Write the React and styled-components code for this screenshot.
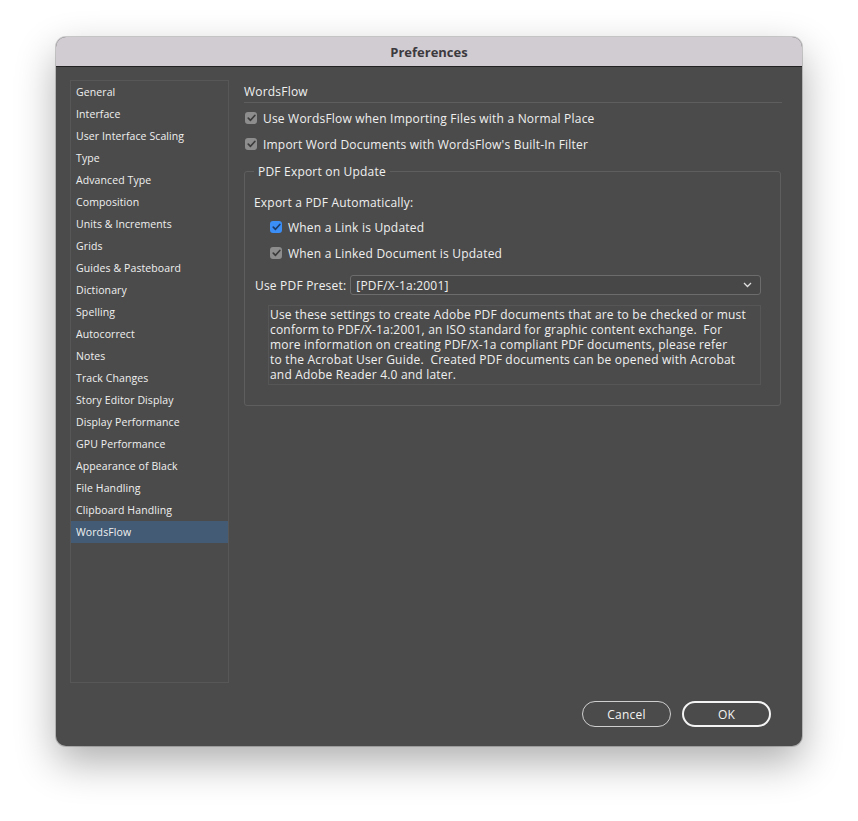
import React from 'react';
import styled, { createGlobalStyle } from 'styled-components';

const GlobalStyle = createGlobalStyle`
  body {
    margin: 0;
    background: #ffffff;
    font-family: "Open Sans", "DejaVu Sans", sans-serif;
  }
`;

const Page = styled.div`
  width: 858px;
  height: 821px;
  padding: 37px 0 0 56px;
  box-sizing: border-box;
`;

const Window = styled.div`
  width: 746px;
  height: 709px;
  display: flex;
  flex-direction: column;
  background: #4b4b4b;
  border-radius: 10px;
  overflow: hidden;
  box-shadow: 0 0 0 1px rgba(0, 0, 0, 0.18), 0 16px 40px rgba(0, 0, 0, 0.32);
`;

const TitleBar = styled.div`
  height: 29px;
  flex: none;
  display: flex;
  align-items: center;
  justify-content: center;
  background: #d1cbd2;
  border-bottom: 1px solid #222222;
  font-size: 13px;
  font-weight: 700;
  color: #3c3a3e;
`;

const Body = styled.div`
  flex: 1;
  display: flex;
  flex-direction: column;
  padding: 13px 20px 0 14px;
`;

const Panes = styled.div`
  height: 603px;
  display: flex;
  gap: 15px;
`;

const Sidebar = styled.ul`
  width: 159px;
  margin: 0;
  padding: 0;
  list-style: none;
  box-sizing: border-box;
  border: 1px solid #575757;
`;

const NavItem = styled.li`
  height: 22px;
  display: flex;
  align-items: center;
  padding-left: 5px;
  font-size: 10.5px;
  letter-spacing: 0.1px;
  color: #f0f0f0;
  background: ${(p) => (p.$active ? '#435b74' : 'transparent')};
`;

const Content = styled.div`
  flex: 1;
  display: flex;
  flex-direction: column;
  letter-spacing: 0.2px;
`;

const SectionTitle = styled.div`
  height: 22px;
  display: flex;
  align-items: center;
  font-size: 12px;
  color: #f0f0f0;
  border-bottom: 1px solid #5e5e5e;
  margin-bottom: 2px;
`;

const CheckRow = styled.label`
  height: 26px;
  display: flex;
  align-items: center;
  gap: 6px;
  padding-left: ${(p) => p.$indent || 1}px;
  font-size: 12px;
  color: #f0f0f0;
`;

const Box = styled.span`
  width: 12px;
  height: 12px;
  flex: none;
  border-radius: 3px;
  display: flex;
  align-items: center;
  justify-content: center;
  background: ${(p) => (p.$blue ? '#3b8ef6' : '#8d8d8d')};
`;

const Group = styled.fieldset`
  margin: 6px 1px 0 0;
  padding: 11px 0 20px 9px;
  border: 1px solid #5e5e5e;
  border-radius: 3px;
`;

const Legend = styled.legend`
  padding: 0 4px;
  margin-left: 0;
  font-size: 12px;
  color: #f0f0f0;
`;

const Caption = styled.div`
  height: 22px;
  display: flex;
  align-items: center;
  font-size: 12px;
  color: #f0f0f0;
  margin-bottom: 1px;
`;

const PresetRow = styled.div`
  display: flex;
  align-items: center;
  gap: 4px;
  margin-top: 9px;
  padding-left: 1px;
  padding-right: 19px;
  font-size: 12px;
  color: #f0f0f0;
`;

const Select = styled.div`
  flex: 1;
  height: 20px;
  box-sizing: border-box;
  display: flex;
  align-items: center;
  justify-content: space-between;
  padding: 0 8px 0 5px;
  border: 1px solid #6c6c6c;
  border-radius: 3px;
  background: #474747;
  font-size: 12px;
  color: #f0f0f0;
`;

const Description = styled.p`
  margin: 10px 19px 0 14px;
  padding: 1px 0 3px 1px;
  height: 80px;
  box-sizing: border-box;
  border: 1px solid #565656;
  font-size: 12px;
  line-height: 15px;
  white-space: nowrap;
  color: #f0f0f0;
`;

const Footer = styled.div`
  display: flex;
  justify-content: flex-end;
  gap: 11px;
  padding: 18px 11px 0 0;
`;

const Button = styled.button`
  width: 89px;
  height: 26px;
  border-radius: 13px;
  background: transparent;
  border: ${(p) => (p.$primary ? '2px solid #f4f4f4' : '1px solid #cfcfcf')};
  font-family: inherit;
  font-size: 12px;
  letter-spacing: 0.2px;
  color: #f4f4f4;
`;

const Check = ({ dark }) => (
  <svg width="9" height="8" viewBox="0 0 9 8">
    <path d="M1.3 4.2 L3.5 6.3 L7.8 1.5" fill="none" stroke={dark} strokeWidth="1.7" strokeLinecap="round" strokeLinejoin="round" />
  </svg>
);

const Checkbox = ({ blue, children, indent }) => (
  <CheckRow $indent={indent}>
    <Box $blue={blue}>
      <Check dark={blue ? '#1c3a66' : '#3b3b3b'} />
    </Box>
    {children}
  </CheckRow>
);

const navItems = [
  'General',
  'Interface',
  'User Interface Scaling',
  'Type',
  'Advanced Type',
  'Composition',
  'Units & Increments',
  'Grids',
  'Guides & Pasteboard',
  'Dictionary',
  'Spelling',
  'Autocorrect',
  'Notes',
  'Track Changes',
  'Story Editor Display',
  'Display Performance',
  'GPU Performance',
  'Appearance of Black',
  'File Handling',
  'Clipboard Handling',
  'WordsFlow',
];

// preset summary, broken the way the preset dialog lays it out
const presetLines = [
  'Use these settings to create Adobe PDF documents that are to be checked or must',
  'conform to PDF/X-1a:2001, an ISO standard for graphic content exchange.\u00a0 For',
  'more information on creating PDF/X-1a compliant PDF documents, please refer',
  'to the Acrobat User Guide.\u00a0 Created PDF documents can be opened with Acrobat',
  'and Adobe Reader 4.0 and later.',
];

export default function App() {
  return (
    <Page>
      <GlobalStyle />
      <Window>
        <TitleBar>Preferences</TitleBar>
        <Body>
          <Panes>
            <Sidebar>
              {navItems.map((item) => (
                <NavItem key={item} $active={item === 'WordsFlow'}>{item}</NavItem>
              ))}
            </Sidebar>
            <Content>
              <SectionTitle>WordsFlow</SectionTitle>
              <Checkbox>Use WordsFlow when Importing Files with a Normal Place</Checkbox>
              <Checkbox>Import Word Documents with WordsFlow's Built-In Filter</Checkbox>
              <Group>
                <Legend>PDF Export on Update</Legend>
                <Caption>Export a PDF Automatically:</Caption>
                <Checkbox blue indent={16}>When a Link is Updated</Checkbox>
                <Checkbox indent={16}>When a Linked Document is Updated</Checkbox>
                <PresetRow>
                  Use PDF Preset:
                  <Select>
                    [PDF/X-1a:2001]
                    <svg width="9" height="6" viewBox="0 0 9 6">
                      <path d="M1 1 L4.5 4.5 L8 1" fill="none" stroke="#e0e0e0" strokeWidth="1.3" />
                    </svg>
                  </Select>
                </PresetRow>
                <Description>
                  {presetLines.map((line, i) => (
                    <React.Fragment key={i}>
                      {line}
                      {i < presetLines.length - 1 && <br />}
                    </React.Fragment>
                  ))}
                </Description>
              </Group>
            </Content>
          </Panes>
          <Footer>
            <Button>Cancel</Button>
            <Button $primary>OK</Button>
          </Footer>
        </Body>
      </Window>
    </Page>
  );
}
